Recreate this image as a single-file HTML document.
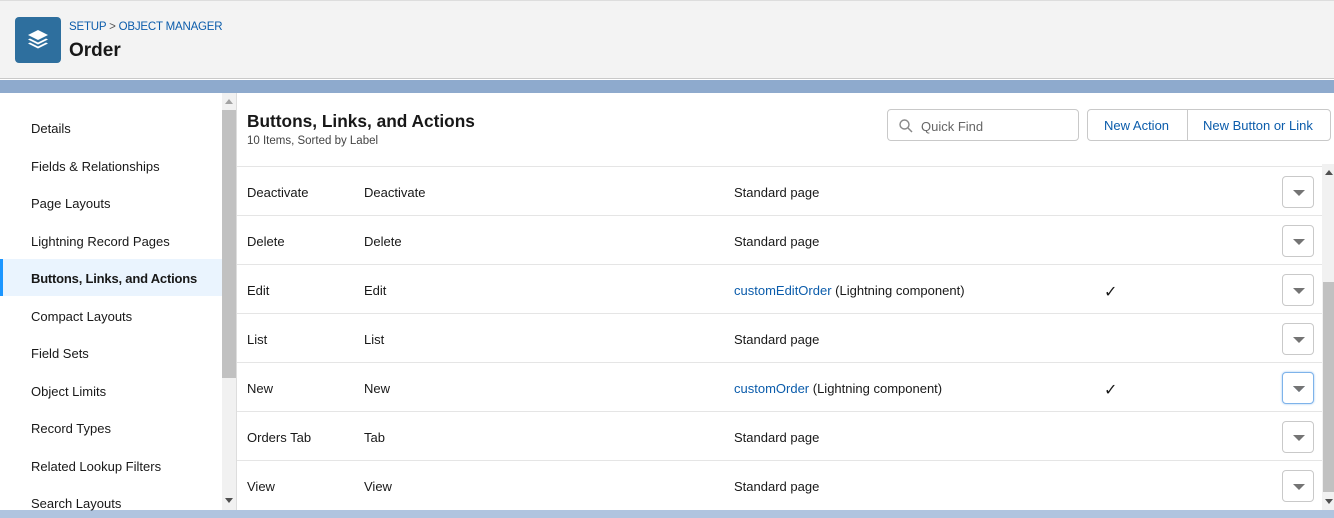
<!DOCTYPE html>
<html><head><style>
*{margin:0;padding:0;box-sizing:border-box}
body{width:1334px;height:518px;overflow:hidden;font-family:"Liberation Sans",sans-serif;font-size:13px;color:#181818;background:#fff;position:relative}
.a{position:absolute}
.nav{left:31px;font-size:13px;color:#181818}
.row{position:absolute;left:237px;width:1085px;height:49px;border-bottom:1px solid #e5e5e5}
.row span{position:absolute;top:18px;font-size:13px}
.dd{position:absolute;left:1045px;top:9px;width:32px;height:32px;border:1px solid #c9c9c9;border-radius:4px;background:#fff}
.dd:after{content:"";position:absolute;left:10px;top:13px;border-left:6px solid transparent;border-right:6px solid transparent;border-top:6px solid #747474}
.lk{color:#0b5cab}
</style></head><body>
<div class="a" style="left:0;top:0;width:1334px;height:79px;background:#f3f3f3;border-bottom:1px solid #c9c9c9;border-top:1px solid #ddd"></div>
<div class="a" style="left:15px;top:17px;width:46px;height:46px;background:#2e6f9e;border-radius:4px">
<svg width="46" height="46" viewBox="0 0 46 46"><g fill="#fff"><path d="M23 13l10 5-10 5-10-5z"/><path d="M15 21.5l8 4 8-4 2 1-10 5-10-5z"/><path d="M15 25.5l8 4 8-4 2 1-10 5-10-5z"/></g></svg></div>
<div class="a" style="left:69px;top:21px;font-size:11.5px;color:#0b5cab;letter-spacing:-0.2px">SETUP <span style="color:#555">&gt;</span> OBJECT MANAGER</div>
<div class="a" style="left:69px;top:40px;font-size:19px;font-weight:bold">Order</div>
<div class="a" style="left:0;top:80px;width:1334px;height:13px;background:#8eaacd"></div>
<div class="a" style="left:0;top:510px;width:1334px;height:8px;background:#b0c4df"></div>
<div class="a" style="left:0;top:259px;width:222px;height:37px;background:#eaf4fe;border-left:3px solid #1b96ff"></div>
<div class="a nav" style="top:121px">Details</div>
<div class="a nav" style="top:159px">Fields &amp; Relationships</div>
<div class="a nav" style="top:196px">Page Layouts</div>
<div class="a nav" style="top:234px">Lightning Record Pages</div>
<div class="a nav" style="top:271px;font-weight:bold;letter-spacing:-0.2px">Buttons, Links, and Actions</div>
<div class="a nav" style="top:309px">Compact Layouts</div>
<div class="a nav" style="top:346px">Field Sets</div>
<div class="a nav" style="top:384px">Object Limits</div>
<div class="a nav" style="top:421px">Record Types</div>
<div class="a nav" style="top:459px">Related Lookup Filters</div>
<div class="a nav" style="top:496px">Search Layouts</div>
<div class="a" style="left:222px;top:93px;width:14px;height:417px;background:#f1f1f1"></div>
<div class="a" style="left:222px;top:110px;width:14px;height:268px;background:#c1c1c1"></div>
<div class="a" style="left:225px;top:99px;border-left:4px solid transparent;border-right:4px solid transparent;border-bottom:5px solid #a3a3a3"></div>
<div class="a" style="left:225px;top:498px;border-left:4px solid transparent;border-right:4px solid transparent;border-top:5px solid #505050"></div>
<div class="a" style="left:236px;top:93px;width:1px;height:417px;background:#ddd"></div>
<div class="a" style="left:247px;top:111px;font-size:17.3px;font-weight:bold">Buttons, Links, and Actions</div>
<div class="a" style="left:247px;top:135px;font-size:11.5px;color:#444">10 Items, Sorted by Label</div>
<div class="a" style="left:887px;top:109px;width:192px;height:32px;border:1px solid #c9c9c9;border-radius:4px">
<svg class="a" style="left:11px;top:9px" width="14" height="14" viewBox="0 0 14 14"><circle cx="5.5" cy="5.5" r="4.5" fill="none" stroke="#888" stroke-width="1.4"/><path d="M9 9l4 4" stroke="#888" stroke-width="1.5"/></svg>
<span class="a" style="left:33px;top:9px;color:#666">Quick Find</span></div>
<div class="a" style="left:1087px;top:109px;width:244px;height:32px;border:1px solid #c9c9c9;border-radius:4px"></div>
<div class="a" style="left:1187px;top:110px;width:1px;height:30px;background:#c9c9c9"></div>
<div class="a" style="left:1104px;top:118px;color:#0b5cab">New Action</div>
<div class="a" style="left:1203px;top:118px;color:#0b5cab">New Button or Link</div>
<div class="a" style="left:237px;top:166px;width:1085px;height:1px;background:#e5e5e5"></div>
<div class="row" style="top:167px"><span style="left:10px">Deactivate</span><span style="left:127px">Deactivate</span><span style="left:497px">Standard page</span><div class="dd"></div></div>
<div class="row" style="top:216px"><span style="left:10px">Delete</span><span style="left:127px">Delete</span><span style="left:497px">Standard page</span><div class="dd"></div></div>
<div class="row" style="top:265px"><span style="left:10px">Edit</span><span style="left:127px">Edit</span><span style="left:497px"><span class="lk" style="position:static">customEditOrder</span> (Lightning component)</span><span style="left:867px;top:17px;font-size:16px">✓</span><div class="dd"></div></div>
<div class="row" style="top:314px"><span style="left:10px">List</span><span style="left:127px">List</span><span style="left:497px">Standard page</span><div class="dd"></div></div>
<div class="row" style="top:363px"><span style="left:10px">New</span><span style="left:127px">New</span><span style="left:497px"><span class="lk" style="position:static">customOrder</span> (Lightning component)</span><span style="left:867px;top:17px;font-size:16px">✓</span><div class="dd" style="border-color:#7eb3ea;box-shadow:0 0 2px #9cc4f0"><i style="position:absolute;left:10px;top:13px;border-left:6px solid transparent;border-right:6px solid transparent;border-top:6px solid #2a5aa0"></i></div></div>
<div class="row" style="top:412px"><span style="left:10px">Orders Tab</span><span style="left:127px">Tab</span><span style="left:497px">Standard page</span><div class="dd"></div></div>
<div class="row" style="top:461px;border-bottom:none"><span style="left:10px">View</span><span style="left:127px">View</span><span style="left:497px">Standard page</span><div class="dd"></div></div>
<div class="a" style="left:1322px;top:164px;width:12px;height:346px;background:#f1f1f1"></div>
<div class="a" style="left:1323px;top:282px;width:11px;height:210px;background:#c1c1c1"></div>
<div class="a" style="left:1325px;top:170px;border-left:4px solid transparent;border-right:4px solid transparent;border-bottom:5px solid #505050"></div>
<div class="a" style="left:1325px;top:499px;border-left:4px solid transparent;border-right:4px solid transparent;border-top:5px solid #505050"></div>
</body></html>
